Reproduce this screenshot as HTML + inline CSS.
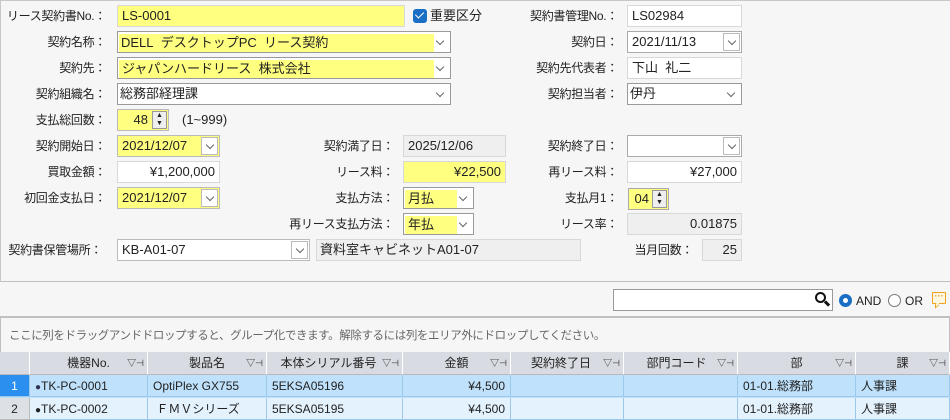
<!DOCTYPE html>
<html><head><meta charset="utf-8"><style>
*{box-sizing:border-box;margin:0;padding:0}
body{width:950px;height:419px;background:#f6f6f6;font-family:"Liberation Sans","Noto Sans CJK JP",sans-serif;font-size:12px;color:#222;position:relative;overflow:hidden}
.a{position:absolute}
.l{position:absolute;text-align:right;white-space:nowrap;line-height:22px;height:22px;letter-spacing:-0.3px}
.f{position:absolute;height:22px;line-height:20px;border:1px solid #d8d8d8;background:#fff;padding:0 4px;white-space:nowrap;overflow:hidden;font-size:13px}
.y{background:#ffff80}
.g{background:#efefef}
.c{border:1px solid #9a9a9a}
.r{text-align:right}
.dd{position:absolute;right:7px;top:6px;width:6px;height:6px;border-right:1px solid #666;border-bottom:1px solid #666;transform:rotate(45deg)}
.db{position:absolute;right:1px;top:1px;width:17px;height:18px;background:#fff;border:1px solid #bbb}
.db:after{content:"";position:absolute;left:5px;top:4px;width:5px;height:5px;border-right:1px solid #666;border-bottom:1px solid #666;transform:rotate(45deg)}
.hd{position:absolute;top:352px;height:23px;line-height:23px;background:#d8dce2;border-right:1px solid #fff;border-bottom:1px solid #b8b8b8;text-align:center;font-size:12px;white-space:nowrap}
.fi{position:absolute;right:3px;top:0;font-size:9px;color:#222}
.cell{position:absolute;height:22px;line-height:22px;padding:0 5px;border-right:1px solid #9cc9ea;border-bottom:1px solid #9cc9ea;white-space:nowrap;overflow:hidden}
</style></head><body>
<div class="a" style="left:0;top:0;width:950px;height:282px;border-top:1px solid #c8c8c8;border-left:1px solid #c8c8c8;border-bottom:1px solid #c0c0c0"></div>

<div class="l" style="left:0;width:106px;top:5px">リース契約書No.：</div>
<div class="f y" style="left:117px;top:5px;width:288px">LS-0001</div>
<div class="a" style="left:413px;top:9px;width:14px;height:14px;background:#1a6fc4;border-radius:3px"></div>
<div class="a" style="top:10px;width:5px;height:8px;border-right:1.5px solid #fff;border-bottom:1.5px solid #fff;transform:rotate(45deg);left:417px"></div>
<div class="a" style="left:430px;top:5px;line-height:22px;font-size:13px">重要区分</div>

<div class="l" style="left:0;width:106px;top:31px">契約名称：</div>
<div class="f c" style="left:117px;top:31px;width:334px;padding:0"><span style="display:inline-block;background:#ffff80;width:315px;margin:2px 0 0 1px;line-height:18px;padding-left:2px">DELL&nbsp; デスクトップPC&nbsp; リース契約</span><span class="dd"></span></div>
<div class="l" style="left:0;width:106px;top:57px">契約先：</div>
<div class="f c" style="left:117px;top:57px;width:334px;padding:0"><span style="display:inline-block;background:#ffff80;width:315px;margin:2px 0 0 1px;line-height:18px;padding-left:3px">ジャパンハードリース&nbsp; 株式会社</span><span class="dd"></span></div>
<div class="l" style="left:0;width:106px;top:83px">契約組織名：</div>
<div class="f c" style="left:117px;top:83px;width:334px;padding-left:2px">総務部経理課<span class="dd"></span></div>
<div class="l" style="left:0;width:106px;top:109px">支払総回数：</div>
<div class="f y c r" style="left:117px;top:109px;width:52px;padding-right:20px;border-color:#bbb">48</div>
<div class="a" style="left:152px;top:111px;width:15px;height:18px;background:#eee;border:1px solid #999;font-size:7px;line-height:8px;text-align:center">▲<br>▼</div>
<div class="a" style="left:182px;top:109px;line-height:22px;font-size:13px">(1~999)</div>
<div class="l" style="left:0;width:106px;top:135px">契約開始日：</div>
<div class="f y c" style="left:117px;top:135px;width:103px;border-color:#bbb">2021/12/07<span class="db"></span></div>
<div class="l" style="left:0;width:106px;top:161px">買取金額：</div>
<div class="f r" style="left:117px;top:161px;width:103px">¥1,200,000</div>
<div class="l" style="left:0;width:106px;top:187px">初回金支払日：</div>
<div class="f y c" style="left:117px;top:187px;width:103px;border-color:#bbb">2021/12/07<span class="db"></span></div>
<div class="l" style="left:0;width:102px;top:239px">契約書保管場所：</div>
<div class="f c" style="left:117px;top:239px;width:193px;border-color:#bbb">KB-A01-07<span class="db"></span></div>
<div class="f g" style="left:316px;top:239px;width:265px;padding-left:3px">資料室キャビネットA01-07</div>

<div class="l" style="left:280px;width:114px;top:135px">契約満了日：</div>
<div class="f g" style="left:403px;top:135px;width:103px">2025/12/06</div>
<div class="l" style="left:280px;width:114px;top:161px">リース料：</div>
<div class="f y r" style="left:403px;top:161px;width:103px">¥22,500</div>
<div class="l" style="left:280px;width:114px;top:187px">支払方法：</div>
<div class="f c" style="left:403px;top:187px;width:71px;padding:0"><span style="display:inline-block;background:#ffff80;width:52px;margin:2px 0 0 1px;line-height:18px;padding-left:3px">月払</span><span class="dd"></span></div>
<div class="l" style="left:280px;width:114px;top:213px">再リース支払方法：</div>
<div class="f c" style="left:403px;top:213px;width:71px;padding:0"><span style="display:inline-block;background:#ffff80;width:52px;margin:2px 0 0 1px;line-height:18px;padding-left:3px">年払</span><span class="dd"></span></div>

<div class="l" style="left:500px;width:118px;top:5px">契約書管理No.：</div>
<div class="f" style="left:627px;top:5px;width:115px">LS02984</div>
<div class="l" style="left:500px;width:118px;top:31px">契約日：</div>
<div class="f c" style="left:627px;top:31px;width:115px;border-color:#aaa">2021/11/13<span class="db"></span></div>
<div class="l" style="left:500px;width:118px;top:57px">契約先代表者：</div>
<div class="f" style="left:627px;top:57px;width:115px">下山&nbsp; 礼二</div>
<div class="l" style="left:500px;width:118px;top:83px">契約担当者：</div>
<div class="f c" style="left:627px;top:83px;width:115px;padding-left:2px">伊丹<span class="dd"></span></div>
<div class="l" style="left:500px;width:118px;top:135px">契約終了日：</div>
<div class="f c" style="left:627px;top:135px;width:115px;border-color:#aaa"><span class="db"></span></div>
<div class="l" style="left:500px;width:118px;top:161px">再リース料：</div>
<div class="f r" style="left:627px;top:161px;width:115px">¥27,000</div>
<div class="l" style="left:500px;width:118px;top:187px">支払月1：</div>
<div class="f y r c" style="left:628px;top:188px;width:41px;padding-right:19px;border-color:#aaa">04</div>
<div class="a" style="left:652px;top:190px;width:15px;height:18px;background:#eee;border:1px solid #999;font-size:7px;line-height:8px;text-align:center">▲<br>▼</div>
<div class="l" style="left:500px;width:118px;top:213px">リース率：</div>
<div class="f g r" style="left:627px;top:213px;width:115px">0.01875</div>
<div class="l" style="left:600px;width:93px;top:239px">当月回数：</div>
<div class="f g r" style="left:702px;top:239px;width:40px">25</div>

<div class="a" style="left:613px;top:289px;width:220px;height:22px;background:#fff;border:1px solid #9a9a9a"></div>
<div class="a" style="left:815px;top:292px;width:11px;height:11px;border:2.5px solid #111;border-radius:50%"></div>
<div class="a" style="left:824px;top:302px;width:6px;height:3px;background:#111;transform:rotate(45deg)"></div>
<div class="a" style="left:839px;top:294px;width:13px;height:13px;border-radius:50%;border:4px solid #1a6fc4;background:#fff"></div>
<div class="a" style="left:856px;top:290px;line-height:22px;font-size:12px">AND</div>
<div class="a" style="left:888px;top:294px;width:13px;height:13px;border-radius:50%;border:1px solid #777;background:#fff"></div>
<div class="a" style="left:905px;top:290px;line-height:22px;font-size:12px">OR</div>
<div class="a" style="left:932px;top:292px;width:14px;height:12px;border:1.5px solid #f0a020;border-radius:1px;background:#fff8e0;font-size:9px;line-height:6px;color:#f0a020;text-align:center;font-weight:bold">···</div>
<div class="a" style="left:935px;top:303px;width:4px;height:4px;border-left:1.5px solid #f0a020;border-bottom:1.5px solid #f0a020;background:#fff8e0;transform:skewY(-40deg)"></div>

<div class="a" style="left:0;top:316px;width:950px;height:37px;background:#f6f6f6;border:1px solid #c0c0c0;border-width:2px 1px 1px 1px"></div>
<div class="a" style="left:9px;top:327px;font-size:11.5px;color:#666;letter-spacing:-0.4px">ここに列をドラッグアンドドロップすると、グループ化できます。解除するには列をエリア外にドロップしてください。</div>

<div class="hd" style="left:0;width:30px"></div>
<div class="hd" style="left:30px;width:118px">機器No.<span class="fi">▽⊣</span></div>
<div class="hd" style="left:148px;width:119px">製品名<span class="fi">▽⊣</span></div>
<div class="hd" style="left:267px;width:136px;padding-right:12px">本体シリアル番号<span class="fi">▽⊣</span></div>
<div class="hd" style="left:403px;width:108px">金額<span class="fi">▽⊣</span></div>
<div class="hd" style="left:511px;width:113px;padding-right:12px">契約終了日<span class="fi">▽⊣</span></div>
<div class="hd" style="left:624px;width:114px;padding-right:8px">部門コード<span class="fi">▽⊣</span></div>
<div class="hd" style="left:738px;width:118px">部<span class="fi">▽⊣</span></div>
<div class="hd" style="left:856px;width:94px">課<span class="fi">▽⊣</span></div>

<div class="a" style="left:0;top:375px;width:950px;height:23px;background:#bfe1fb"></div>
<div class="a" style="left:0;top:398px;width:950px;height:21px;background:#e3f2fd"></div>
<div class="cell" style="left:0;top:375px;width:30px;background:#2b8ff0;color:#fff;text-align:center">1</div>
<div class="cell" style="left:0;top:398px;width:30px;background:#dde1e6;text-align:center;border-color:#bbb">2</div>
<div class="cell" style="left:30px;top:375px;width:118px"><span style="font-size:10px;color:#335">●</span>TK-PC-0001</div>
<div class="cell" style="left:148px;top:375px;width:119px">OptiPlex GX755</div>
<div class="cell" style="left:267px;top:375px;width:136px">5EKSA05196</div>
<div class="cell r" style="left:403px;top:375px;width:108px">¥4,500</div>
<div class="cell" style="left:511px;top:375px;width:113px"></div>
<div class="cell" style="left:624px;top:375px;width:114px"></div>
<div class="cell" style="left:738px;top:375px;width:118px">01-01.総務部</div>
<div class="cell" style="left:856px;top:375px;width:94px">人事課</div>
<div class="cell" style="left:30px;top:398px;width:118px"><span style="font-size:10px">●</span>TK-PC-0002</div>
<div class="cell" style="left:148px;top:398px;width:119px">&nbsp;ＦＭＶシリーズ</div>
<div class="cell" style="left:267px;top:398px;width:136px">5EKSA05195</div>
<div class="cell r" style="left:403px;top:398px;width:108px">¥4,500</div>
<div class="cell" style="left:511px;top:398px;width:113px"></div>
<div class="cell" style="left:624px;top:398px;width:114px"></div>
<div class="cell" style="left:738px;top:398px;width:118px">01-01.総務部</div>
<div class="cell" style="left:856px;top:398px;width:94px">人事課</div>
</body></html>
